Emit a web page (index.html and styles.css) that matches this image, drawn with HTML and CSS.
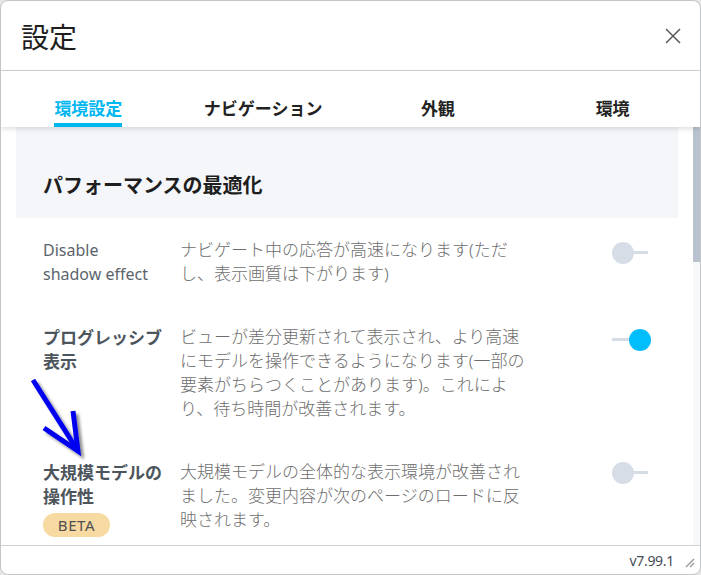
FILE: index.html
```html
<!DOCTYPE html>
<html lang="ja">
<head>
<meta charset="utf-8">
<title>設定</title>
<link rel="stylesheet" href="styles.css">
</head>
<body>
<div class="dialog">
  <header class="header">
    <h1 class="title">設定</h1>
    <button class="close" aria-label="閉じる">
      <svg width="16" height="16" viewBox="0 0 16 16"><path d="M1 1 L15 15 M15 1 L1 15" stroke="#5a5a5a" stroke-width="1.5" fill="none"/></svg>
    </button>
  </header>
  <nav class="tabs">
    <div class="tab active"><span class="tab-label">環境設定</span></div>
    <div class="tab"><span class="tab-label">ナビゲーション</span></div>
    <div class="tab"><span class="tab-label">外観</span></div>
    <div class="tab"><span class="tab-label">環境</span></div>
  </nav>
  <div class="body">
    <div class="scroll">
      <div class="section-head">パフォーマンスの最適化</div>
      <div class="row">
        <div class="label plain">Disable<br>shadow effect</div>
        <div class="desc">ナビゲート中の応答が高速になります(ただ<br>し、表示画質は下がります)</div>
        <div class="toggle"><span class="track"></span><span class="knob"></span></div>
      </div>
      <div class="row">
        <div class="label">プログレッシブ<br>表示</div>
        <div class="desc">ビューが差分更新されて表示され、より高速<br>にモデルを操作できるようになります(一部の<br>要素がちらつくことがあります)。これによ<br>り、待ち時間が改善されます。</div>
        <div class="toggle on"><span class="track"></span><span class="knob"></span></div>
      </div>
      <div class="row">
        <div class="label">大規模モデルの<br>操作性<span class="badge">BETA</span></div>
        <div class="desc">大規模モデルの全体的な表示環境が改善され<br>ました。変更内容が次のページのロードに反<br>映されます。</div>
        <div class="toggle low"><span class="track"></span><span class="knob"></span></div>
      </div>
    </div>
    <div class="scrollbar"><div class="thumb"></div></div>
  </div>
  <footer class="footer">
    <span class="version">v7.99.1</span>
    <svg class="grip" width="12" height="12" viewBox="0 0 12 12"><path d="M2 11 L10 3 M6 11 L10 7" stroke="#9a9a9a" stroke-width="1.4" fill="none"/></svg>
  </footer>
  <svg class="arrow" width="80" height="100" viewBox="0 0 80 100">
    <defs>
      <filter id="sh" x="-30%" y="-30%" width="160%" height="160%">
        <feGaussianBlur in="SourceAlpha" stdDeviation="1.6"/>
        <feOffset dx="3" dy="3" result="b"/>
        <feComponentTransfer><feFuncA type="linear" slope="0.45"/></feComponentTransfer>
        <feMerge><feMergeNode/><feMergeNode in="SourceGraphic"/></feMerge>
      </filter>
    </defs>
    <g filter="url(#sh)" stroke="#0000f0" stroke-width="5" fill="none" stroke-linecap="butt" stroke-linejoin="miter">
      <path d="M13 10 L58 81"/>
      <path d="M53 41 L58 81 L24 58"/>
    </g>
  </svg>
</div>
</body>
</html>
```
FILE: styles.css
```css
* { box-sizing: border-box; }
html, body { margin: 0; padding: 0; }
body {
  background: #e6e6e6;
  font-family: "Noto Sans", "Noto Sans CJK JP", sans-serif;
  color: #222;
}
.dialog {
  position: relative;
  width: 701px;
  height: 575px;
  background: #fff;
  border: 1px solid #c3c6c9;
  border-radius: 8px;
  overflow: hidden;
  display: flex;
  flex-direction: column;
}
.header {
  height: 70px;
  flex: none;
  display: flex;
  align-items: center;
  justify-content: space-between;
  padding: 0 19px 0 20px;
  border-bottom: 1px solid #cfd1d3;
}
.title {
  margin: 0;
  font-size: 28px;
  font-weight: 400;
  line-height: 36px;
  color: #1e1e1e;
  font-family: "Noto Sans CJK JP", sans-serif;
}
.close {
  border: 0;
  background: none;
  padding: 0;
  width: 16px;
  height: 16px;
  display: flex;
}
.tabs {
  position: relative;
  z-index: 2;
  flex: none;
  height: 56px;
  display: grid;
  grid-template-columns: repeat(4, 1fr);
  box-shadow: 0 2px 5px rgba(0, 0, 0, 0.13);
  background: #fff;
}
.tab {
  display: flex;
  justify-content: center;
  padding-top: 25px;
}
.tab-label {
  font-family: "Noto Sans CJK JP", sans-serif;
  font-size: 17px;
  font-weight: 700;
  line-height: 24px;
  height: 31px;
  color: #222;
  border-bottom: 4px solid transparent;
  padding: 0 0 3px;
}
.tab.active .tab-label {
  color: #00b7f1;
  border-bottom-color: #00b7f1;
}
.body {
  flex: 1;
  min-height: 0;
  display: flex;
  overflow: hidden;
}
.scroll {
  flex: 1;
  padding: 0 15px;
  overflow: hidden;
}
.section-head {
  background: #f4f6f9;
  height: 91px;
  padding: 45px 0 0 27px;
  font-family: "Noto Sans CJK JP", sans-serif;
  font-size: 20px;
  font-weight: 700;
  line-height: 26px;
  color: #1e1e1e;
}
.row {
  display: grid;
  grid-template-columns: 137px 432px 40px;
  padding: 19.5px 0 19.5px 27px;
}
.label {
  font-family: "Noto Sans CJK JP", sans-serif;
  font-size: 17px;
  font-weight: 700;
  line-height: 24px;
  color: #4d555c;
}
.label.plain {
  font-family: "Noto Sans", "Noto Sans CJK JP", sans-serif;
  font-weight: 400;
  font-size: 16px;
  color: #5b646c;
}
.badge {
  display: block;
  width: 67px;
  height: 24px;
  margin-top: 5.5px;
  border-radius: 12px;
  background: #f7d9a2;
  color: #4f4f4f;
  font-family: "Noto Sans", sans-serif;
  font-weight: 400;
  font-size: 15px;
  line-height: 24px;
  text-align: center;
  letter-spacing: 0.6px;
}
.desc {
  font-size: 17px;
  line-height: 24px;
  color: #6e6e6e;
  font-weight: 300;
  white-space: nowrap;
}
.toggle {
  position: relative;
  width: 39px;
  height: 22px;
  margin-top: 4px;
}
.toggle.low { margin-top: 2px; }
.toggle .track {
  position: absolute;
  left: 0;
  top: 9.5px;
  width: 36px;
  height: 3px;
  background: #d5dce4;
}
.toggle .knob {
  position: absolute;
  top: 0;
  left: 0;
  width: 22px;
  height: 22px;
  border-radius: 50%;
  background: #d6dde6;
}
.toggle.on .track { width: 20px; }
.toggle.on .knob {
  left: 17px;
  background: #00bdfc;
}
.scrollbar {
  flex: none;
  width: 7px;
  background: #f7f8f9;
}
.thumb {
  height: 135px;
  background: #b9c3cd;
}
.footer {
  flex: none;
  height: 29px;
  border-top: 1px solid #cfd1d3;
  display: flex;
  align-items: center;
  justify-content: flex-end;
  padding-right: 4px;
  gap: 10px;
}
.version {
  font-family: "Noto Sans", sans-serif;
  font-size: 14px;
  color: #444c55;
  letter-spacing: -0.3px;
}
.grip { margin-top: 4px; }
.arrow {
  position: absolute;
  left: 19px;
  top: 369px;
  z-index: 3;
}
```
